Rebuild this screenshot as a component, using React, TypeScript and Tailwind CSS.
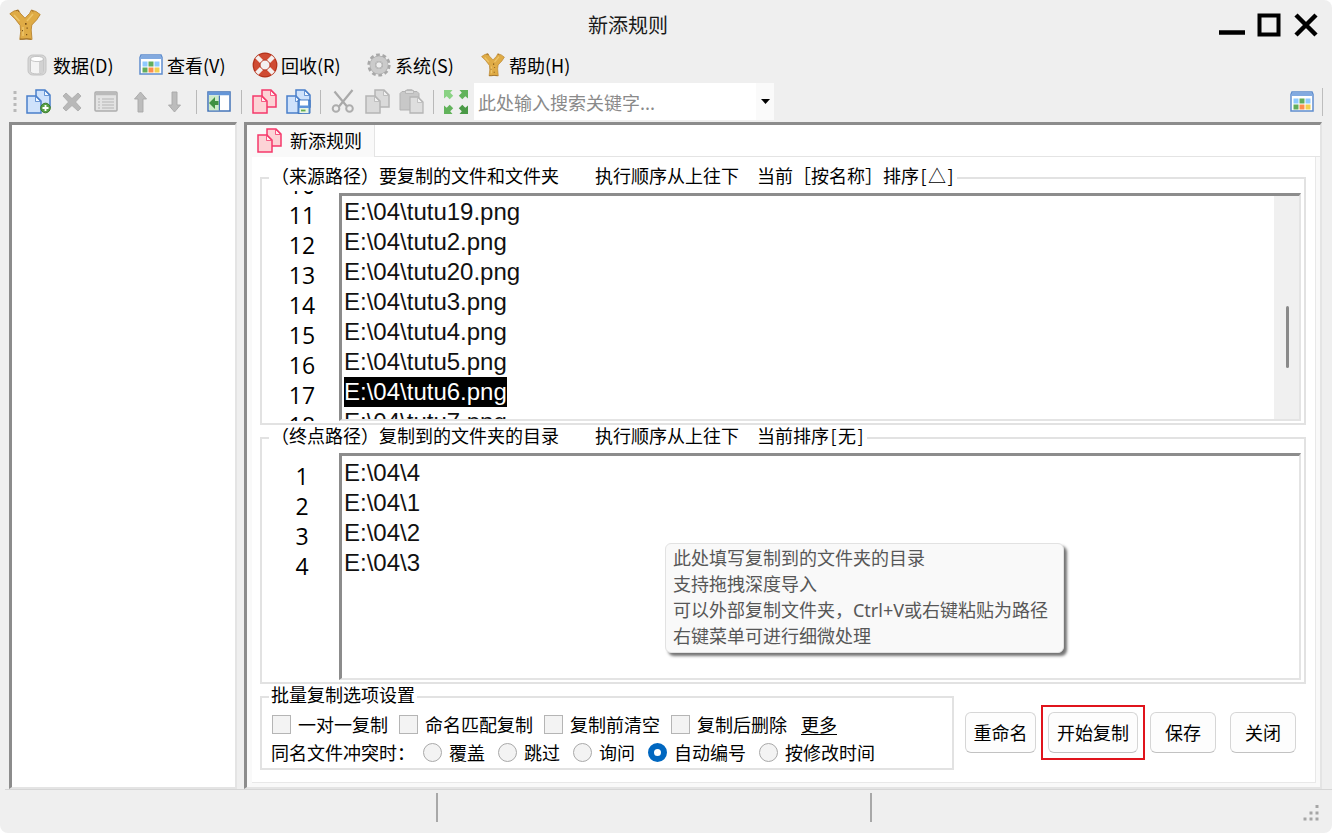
import { useEffect, useRef, useState } from "react";
import type { ReactNode } from "react";

const sourceFiles = [
  "tutu1", "tutu10", "tutu11", "tutu12", "tutu13", "tutu14", "tutu15", "tutu16", "tutu17", "tutu18",
  "tutu19", "tutu2", "tutu20", "tutu3", "tutu4", "tutu5", "tutu6", "tutu7", "tutu8", "tutu9",
].map((name) => `E:\\04\\${name}.png`);
const selectedFile = "E:\\04\\tutu6.png";
const targetFolders = ["E:\\04\\4", "E:\\04\\1", "E:\\04\\2", "E:\\04\\3"];

const ROW_HEIGHT = 30;
const GUTTER_TOP = 10;

/* ---------- icons ---------- */

function LogoIcon({ className }: { className: string }) {
  return (
    <svg viewBox="0 0 32 32" className={className} aria-hidden="true">
      <path
        d="M.8 4.800 5 2l4.400-1 1.600 3 5 5.200 4.600-4.800L22.400 1 27 2.500l4.200 3-3.400 5.200-5 5.300-.6 5 .8 9.500-6-.6-6.200.6.9-8-.5-6-5-6.500Z"
        fill="#dfab45"
        stroke="#b98430"
        strokeWidth=".9"
        strokeLinejoin="round"
      />
      <path d="m5 6 5.500 6M24 5l-6 7" stroke="#edc468" strokeWidth="1.600" fill="none" />
      <path d="M14 18v9" stroke="#edc468" strokeWidth="1.600" fill="none" />
      <path d="M16 14h1.600v1.800H16zM17.500 18.500h1.300v1.300h-1.300zM13 21h1v1.200h-1zM17 25h1.200v1.300H17z" fill="#7a5118" />
      <path d="m7 1.800 1.800-.6 1 1.800M22.600 1.400l1.800 1.200M11 30l3 .2 4-.4 4 .4" stroke="#8f6120" strokeWidth=".8" fill="none" />
    </svg>
  );
}

function DatabaseIcon() {
  return (
    <svg viewBox="0 0 24 24" className="h-6 w-6" aria-hidden="true">
      <rect x="3" y="2" width="18" height="20" rx="4.500" fill="#d6d6d6" stroke="#c4c4c4" />
      <path d="M5.500 6v12.500c0 3.200 13 3.200 13 0V6Z" fill="#f4f4f4" stroke="#bdbdbd" strokeWidth=".8" />
      <path d="M14 8.500v12c3-.3 4.200-1 4.200-2V7Z" fill="#d2d2d2" />
      <ellipse cx="12" cy="6" rx="6.500" ry="2.600" fill="#fff" stroke="#bababa" strokeWidth=".8" />
    </svg>
  );
}

function CalendarIcon() {
  const cells = [
    ["#8fcaff", 3.5, 7.5], ["#63ad5c", 9.5, 7.5], ["#8fcaff", 15.5, 7.5],
    ["#63ad5c", 3.5, 13.5], ["#ff8d4d", 9.5, 13.5], ["#f2d04f", 15.5, 13.5],
  ] as const;
  return (
    <svg viewBox="0 0 24 21" className="h-[21px] w-6" aria-hidden="true">
      <path d="M1 3.500 2 1h20l1 2.500V20H1Z" fill="#fff" stroke="#5f8dce" strokeWidth="1.500" />
      <path d="M1.500 5V3.500l1-2h19l1 2V5Z" fill="#82aae0" />
      {cells.map(([fill, x, y]) => (
        <rect key={`${x}-${y}`} x={x} y={y} width="5" height="5" fill={fill} />
      ))}
    </svg>
  );
}

function LifebuoyIcon() {
  return (
    <svg viewBox="0 0 26 26" className="h-[26px] w-[26px]" aria-hidden="true">
      <circle cx="13" cy="13" r="8.400" fill="none" stroke="#b3311a" strokeWidth="8" />
      <circle cx="13" cy="13" r="8.400" fill="none" stroke="#cf4b33" strokeWidth="5.600" />
      <path d="m4.800 4.800 4.700 4.700M21.200 4.800l-4.700 4.700M4.800 21.200l4.700-4.700M21.200 21.200l-4.700-4.700" stroke="#f4efee" strokeWidth="4.400" />
      <circle cx="13" cy="13" r="4.800" fill="#f3f1f1" stroke="#c0503c" strokeWidth=".8" />
    </svg>
  );
}

function GearIcon() {
  return (
    <svg viewBox="0 0 24 24" className="h-6 w-6" aria-hidden="true">
      <circle cx="12" cy="12" r="9.800" fill="none" stroke="#a8a8a8" strokeWidth="3.600" strokeDasharray="3.600 2.557" />
      <circle cx="12" cy="12" r="6.400" fill="none" stroke="#adadad" strokeWidth="6" />
      <circle cx="12" cy="12" r="6.400" fill="none" stroke="#cbcbcb" strokeWidth="4.800" />
      <circle cx="12" cy="12" r="3.200" fill="#efefef" stroke="#a3a3a3" strokeWidth=".8" />
    </svg>
  );
}

const pageTones = {
  pink: { line: "#f5396b", fill: "#fcd3d6", fold: "#fff0f2" },
  blue: { line: "#4a7fca", fill: "#cfe2fb", fold: "#f3f9ff" },
  gray: { line: "#b5b5b5", fill: "#dadada", fold: "#f1f1f1" },
};

function PagesIcon({ tone, badge }: { tone: keyof typeof pageTones; badge?: "add" | "save" }) {
  const { line, fill, fold } = pageTones[tone];
  return (
    <svg viewBox="0 0 25 25" className="h-[25px] w-[25px]" aria-hidden="true">
      <path d="M10 1h9L24 6v12H10Z" fill={fill} stroke={line} strokeWidth="1.500" />
      <path d="M18.500 1.500V6.500h5Z" fill={fold} stroke={line} strokeWidth=".8" />
      <path d="M1 7h9L15 12v12H1Z" fill={fill} stroke={line} strokeWidth="1.500" />
      <path d="M9.500 7.500v5h5Z" fill={fold} stroke={line} strokeWidth=".8" />
      {badge === "add" && (
        <>
          <circle cx="19.500" cy="19" r="4.800" fill="#57a044" stroke="#3a7a2c" />
          <path d="M19.500 16v6M16.500 19h6" stroke="#fff" strokeWidth="1.800" />
        </>
      )}
      {badge === "save" && (
        <>
          <path d="M12 11h12v13.300H12Z" fill="#5f95da" stroke="#3f74bd" />
          <path d="M14 11.500h8v5h-8Z" fill="#fff" />
          <path d="M13.500 19h9v5h-9Z" fill="#e9f4e3" />
          <path d="M15 21.500h4.500" stroke="#62ad4f" strokeWidth="1.800" />
        </>
      )}
    </svg>
  );
}

function CrossIcon() {
  return (
    <svg viewBox="0 0 20 20" className="h-5 w-5" aria-hidden="true">
      <path d="m1 4 3-3 6 5.500L16 1l3 3-5.500 6 5.500 6-3 3-6-5.500L4 19l-3-3 5.500-6Z" fill="#b8b8b8" stroke="#aaa" strokeWidth=".8" />
    </svg>
  );
}

function ListIcon() {
  return (
    <svg viewBox="0 0 24 21" className="h-[21px] w-6" aria-hidden="true">
      <rect x="1" y="1" width="22" height="19" rx="1" fill="#e3e3e3" stroke="#adadad" strokeWidth="1.500" />
      <path d="M1.500 3h21" stroke="#bababa" strokeWidth="2.500" />
      <path d="M4 8h2M4 11h2M4 14h2M4 17h2M8 8h12M8 11h12M8 14h12M8 17h12" stroke="#b5b5b5" strokeWidth="1.200" />
    </svg>
  );
}

function ArrowIcon({ down }: { down?: boolean }) {
  return (
    <svg viewBox="0 0 13 22" className="h-[22px] w-[13px]" aria-hidden="true">
      <path
        d={down ? "M4 1h5v13h3.500l-6 7-6-7H4Z" : "M6.500 1l6 7H9v13H4V8H.5Z"}
        fill="#bcbcbc"
        stroke="#a8a8a8"
        strokeWidth=".9"
      />
    </svg>
  );
}

function SidebarIcon() {
  return (
    <svg viewBox="0 0 24 21" className="h-[21px] w-6" aria-hidden="true">
      <rect x="1" y="1" width="22" height="19" fill="#fff" stroke="#4474b8" strokeWidth="1.500" />
      <path d="M1 2.800h22" stroke="#6496d8" strokeWidth="3" />
      <path d="M2 4.500h10v14.700H2Z" fill="#cdebc8" />
      <path d="M12.400 4.500v15" stroke="#4474b8" strokeWidth="1.200" />
      <path d="M2 12 8 6v4h3.500v4H8v4Z" fill="#3f9142" />
    </svg>
  );
}

function CutIcon() {
  return (
    <svg viewBox="0 0 24 25" className="h-[25px] w-6" aria-hidden="true">
      <path d="M3.500 2.500 16 17.500M21.500 1 8 17.500" stroke="#a9a9a9" strokeWidth="2.200" fill="none" />
      <circle cx="5" cy="19.500" r="3.300" fill="#efefef" stroke="#adadad" strokeWidth="2" />
      <circle cx="18.500" cy="19.500" r="3.300" fill="#efefef" stroke="#adadad" strokeWidth="2" />
    </svg>
  );
}

function PasteIcon() {
  return (
    <svg viewBox="0 0 25 25" className="h-[25px] w-[25px]" aria-hidden="true">
      <path d="M1 4.500 3 2.500h3L8 .8h5l2 1.700h3l2 2V21H1Z" fill="#c8c8c8" stroke="#b3b3b3" />
      <path d="M6.500 1.500h8v3h-8Z" fill="#dedede" stroke="#b3b3b3" strokeWidth=".8" />
      <path d="M11 8h8L24 13v11H11Z" fill="#dedede" stroke="#b5b5b5" strokeWidth="1.300" />
      <path d="M18.500 8.500v5h5Z" fill="#f3f3f3" stroke="#b8b8b8" strokeWidth=".8" />
    </svg>
  );
}

function ExpandIcon() {
  return (
    <svg viewBox="0 0 26 26" className="h-[26px] w-[26px]" aria-hidden="true">
      <path d="M1 1h8.500L7.200 3.700l3 3-3.500 3.500-3-3L1 9.500Z" fill="#8ad284" />
      <path d="M25 1v8.500l-2.700-2.300-3 3-3.500-3.500 3-3L16.500 1Z" fill="#62b35b" />
      <path d="M1 25v-8.500l2.700 2.300 3-3 3.500 3.500-3 3L9.500 25Z" fill="#62b35b" />
      <path d="M25 25h-8.500l2.300-2.700-3-3 3.500-3.500 3 3 2.700-2.300Z" fill="#4a9a46" />
    </svg>
  );
}

/* ---------- building blocks ---------- */

function MenuItem({ icon, children }: { icon: ReactNode; children: ReactNode }) {
  return (
    <button type="button" className="flex w-[114px] items-center gap-[3px] whitespace-nowrap text-[18px] leading-6 text-black">
      <span className="flex w-[26px] shrink-0 justify-center">{icon}</span>
      {children}
    </button>
  );
}

function ToolButton({ label, disabled, children }: { label: string; disabled?: boolean; children: ReactNode }) {
  return (
    <button type="button" aria-label={label} disabled={disabled} className="flex h-full w-[34px] shrink-0 items-center justify-center">
      {children}
    </button>
  );
}

function ToolSeparator() {
  return (
    <span className="flex w-[11px] shrink-0 justify-center">
      <span className="h-6 w-px bg-[#b9b9b9]" />
    </span>
  );
}

function Bracketed({ children }: { children: ReactNode }) {
  return (
    <>
      <span className="inline-block w-[9px] text-center">[</span>
      {children}
      <span className="inline-block w-[9px] text-center">]</span>
    </>
  );
}

const groupClass = "flex min-w-0 flex-col border-2 border-[#e2e2e2]";
const legendClass = "ml-[7px] h-[26px] px-[2px] text-[18px] leading-5 whitespace-pre text-black";
const sunkenClass =
  "border-t-[3px] border-r-2 border-b-2 border-l-[3px] border-t-[#8c8c8c] border-r-[#e4e4e4] border-b-[#e4e4e4] border-l-[#8c8c8c]";

interface PathGroupProps {
  legend: ReactNode;
  label: string;
  lines: string[];
  selected?: string;
  scrollTo?: number;
}

function PathGroup({ legend, label, lines, selected, scrollTo = 0 }: PathGroupProps) {
  const text = useRef<HTMLTextAreaElement>(null);
  const [view, setView] = useState({ top: 0, height: 240, fraction: 0 });
  const value = lines.join("\n");

  const sync = () => {
    const area = text.current;
    if (!area) return;
    const range = area.scrollHeight - area.clientHeight;
    setView({
      top: area.scrollTop,
      height: area.clientHeight,
      fraction: range > 0 ? area.scrollTop / range : 0,
    });
  };

  useEffect(() => {
    const area = text.current;
    if (!area) return;
    if (selected) {
      const start = value.indexOf(selected);
      area.focus({ preventScroll: true });
      area.setSelectionRange(start, start + selected.length);
      area.scrollTop = scrollTo;
    }
    sync();
    window.addEventListener("resize", sync);
    return () => window.removeEventListener("resize", sync);
  }, []);

  // Only the numbers of rows inside the viewport are rendered.
  const first = Math.max(0, Math.floor((view.top - GUTTER_TOP) / ROW_HEIGHT));
  const last = Math.min(lines.length, Math.ceil((view.top + view.height - GUTTER_TOP) / ROW_HEIGHT));
  const offset = GUTTER_TOP + first * ROW_HEIGHT - view.top;

  return (
    <fieldset className={`${groupClass} min-h-0 flex-1 basis-0 pr-[3px] pb-[2px]`}>
      <legend className={legendClass}>{legend}</legend>
      <div className="flex min-h-0 flex-1">
        <div
          aria-hidden="true"
          className="h-full w-[77px] shrink-0 overflow-hidden pl-[3px] text-center font-['Open_Sans'] text-[23px] leading-[30px] text-black"
        >
          <div style={{ marginTop: offset }}>
            {lines.slice(first, last).map((line, index) => (
              <div key={line}>{first + index + 1}</div>
            ))}
          </div>
        </div>
        <div className={`mt-[2px] flex min-w-0 flex-1 ${sunkenClass}`}>
          <textarea
            ref={text}
            aria-label={label}
            defaultValue={value}
            onScroll={sync}
            spellCheck={false}
            wrap="off"
            className={`min-w-0 flex-1 resize-none bg-white pt-[2px] pl-[2px] font-['Liberation_Sans'] text-[24px] leading-[30px] text-[#111] outline-none [scrollbar-width:none] selection:bg-black selection:text-white ${
              selected ? "pb-[60px]" : ""
            }`}
          />
          {selected && (
            <div className="relative w-[25px] shrink-0 bg-[#f0f0f0]">
              <div
                className="absolute right-[10px] h-[62px] w-[3px] rounded-full bg-[#8a8a8a]"
                style={{ top: `calc((100% - 62px) * ${view.fraction})` }}
              />
            </div>
          )}
        </div>
      </div>
    </fieldset>
  );
}

function CheckOption({ children }: { children: ReactNode }) {
  return (
    <label className="flex items-center gap-[7px]">
      <input type="checkbox" className="h-[19px] w-[19px] appearance-none border border-[#b5b5b5] bg-[#f3f3f3] checked:bg-[#0067c0]" />
      {children}
    </label>
  );
}

function RadioOption({ children, checked }: { children: ReactNode; checked?: boolean }) {
  return (
    <label className="flex items-center gap-[7px]">
      <input
        type="radio"
        name="conflict"
        defaultChecked={checked}
        className="h-[19px] w-[19px] appearance-none rounded-full border border-[#a9a9a9] bg-[#f3f3f3] checked:border-[6px] checked:border-[#0067c0] checked:bg-white"
      />
      {children}
    </label>
  );
}

const actionClass = "h-[41px] rounded-md border border-[#d6d6d6] border-b-[#c2c2c2] bg-[#fdfdfd] text-[18px] leading-5 text-black";

/* ---------- window ---------- */

export default function App() {
  return (
    <div className="bg-white">
      <div className="flex h-screen min-h-[600px] flex-col overflow-hidden rounded-lg bg-[#efefef] font-['Noto_Sans_CJK_SC',sans-serif]">
        <header className="grid h-[46px] shrink-0 grid-cols-[1fr_auto_1fr] items-center pt-1 pr-[13px] pl-[9px]">
          <LogoIcon className="h-8 w-8" />
          <h1 className="pr-[72px] text-[20px] leading-6 text-[#1a1a1a]">新添规则</h1>
          <div className="flex items-center justify-end gap-[12px] text-black">
            <button type="button" aria-label="最小化">
              <svg viewBox="0 0 26 26" className="h-[26px] w-[26px]" aria-hidden="true">
                <path d="M0 20.500h26" stroke="currentColor" strokeWidth="4.500" />
              </svg>
            </button>
            <button type="button" aria-label="最大化">
              <svg viewBox="0 0 24 24" className="h-6 w-6" aria-hidden="true">
                <rect x="2.500" y="2.500" width="19" height="19" fill="none" stroke="currentColor" strokeWidth="4" />
              </svg>
            </button>
            <button type="button" aria-label="关闭窗口">
              <svg viewBox="0 0 26 26" className="h-[26px] w-[26px]" aria-hidden="true">
                <path d="m3 3 20 20M23 3 3 23" stroke="currentColor" strokeWidth="4.500" />
              </svg>
            </button>
          </div>
        </header>

        <nav className="flex h-[37px] shrink-0 items-center pl-[24px]">
          <MenuItem icon={<DatabaseIcon />}>数据(D)</MenuItem>
          <MenuItem icon={<CalendarIcon />}>查看(V)</MenuItem>
          <MenuItem icon={<LifebuoyIcon />}>回收(R)</MenuItem>
          <MenuItem icon={<GearIcon />}>系统(S)</MenuItem>
          <MenuItem icon={<LogoIcon className="h-6 w-6" />}>帮助(H)</MenuItem>
        </nav>

        <div className="flex h-[39px] shrink-0 items-center pr-[9px] pb-[2px] pl-[13px]">
          <svg viewBox="0 0 8 24" className="h-6 w-2 shrink-0" aria-hidden="true">
            <path d="M2 1v22" stroke="#b9b9b9" strokeWidth="3" strokeDasharray="3 3" />
          </svg>
          <ToolButton label="新建"><PagesIcon tone="blue" badge="add" /></ToolButton>
          <ToolButton label="删除" disabled><CrossIcon /></ToolButton>
          <ToolButton label="列表" disabled><ListIcon /></ToolButton>
          <ToolButton label="上移" disabled><ArrowIcon /></ToolButton>
          <ToolButton label="下移" disabled><ArrowIcon down /></ToolButton>
          <ToolSeparator />
          <ToolButton label="侧栏"><SidebarIcon /></ToolButton>
          <ToolSeparator />
          <ToolButton label="批量复制"><PagesIcon tone="pink" /></ToolButton>
          <ToolButton label="复制并保存"><PagesIcon tone="blue" badge="save" /></ToolButton>
          <ToolSeparator />
          <ToolButton label="剪切" disabled><CutIcon /></ToolButton>
          <ToolButton label="复制" disabled><PagesIcon tone="gray" /></ToolButton>
          <ToolButton label="粘贴" disabled><PasteIcon /></ToolButton>
          <ToolSeparator />
          <ToolButton label="全屏"><ExpandIcon /></ToolButton>
          <div className="ml-px flex h-full w-[300px] items-stretch bg-white">
            <input
              type="text"
              aria-label="搜索"
              placeholder="此处输入搜索关键字..."
              className="min-w-0 flex-1 bg-transparent pl-1 text-[18px] leading-6 text-black outline-none placeholder:text-[#8a8a8a]"
            />
            <button type="button" aria-label="展开搜索记录" className="flex w-[18px] items-center justify-center bg-[#fafafa]">
              <svg viewBox="0 0 9 5" className="h-[5px] w-[9px]" aria-hidden="true">
                <path d="M0 0h9L4.500 5Z" fill="#000" />
              </svg>
            </button>
          </div>
          <div className="ml-auto flex items-center gap-2">
            <button type="button" aria-label="视图"><CalendarIcon /></button>
            <span className="h-7 w-px bg-[#bdbdbd]" />
          </div>
        </div>

        <div className="flex min-h-0 flex-1 gap-[7px] pr-[10px] pl-[9px]">
          <aside aria-label="规则列表" className={`w-[228px] shrink-0 bg-white ${sunkenClass}`} />
          <main className={`flex min-w-0 flex-1 flex-col bg-[#f9f9f9] ${sunkenClass}`}>
            <div role="tablist" className="flex h-[32px] shrink-0 bg-white">
              <button
                type="button"
                role="tab"
                aria-selected="true"
                className="flex w-[128px] items-center gap-[8px] border-r border-[#e4e4e4] bg-[#f9f9f9] pb-[2px] pl-[10px] text-[18px] leading-5 text-black"
              >
                <PagesIcon tone="pink" />
                新添规则
              </button>
              <div className="flex-1 border-b border-[#e4e4e4]" />
            </div>

            <section className="mr-1 mb-1 ml-[5px] flex min-h-0 flex-1 flex-col border-r border-b border-[#e8e8e8] bg-white pt-[8px] pr-[9px] pb-[12px] pl-[8px]">
              <div className="relative flex min-h-0 flex-1 flex-col">
                <PathGroup
                  legend={
                    <>
                      （来源路径）要复制的文件和文件夹　　执行顺序从上往下　当前［按名称］排序
                      <Bracketed>△</Bracketed>
                    </>
                  }
                  label="来源路径"
                  lines={sourceFiles}
                  selected={selectedFile}
                  scrollTo={301}
                />
                <PathGroup
                  legend={
                    <>
                      （终点路径）复制到的文件夹的目录　　执行顺序从上往下　当前排序
                      <Bracketed>无</Bracketed>
                    </>
                  }
                  label="终点路径"
                  lines={targetFolders}
                />
                <div
                  role="tooltip"
                  className="absolute bottom-[31px] left-[405px] rounded-md border border-[#e2e2e2] bg-[#f9f9f9] pt-px pr-[15px] pb-[3px] pl-[7px] font-['Noto_Sans','Noto_Sans_CJK_SC',sans-serif] text-[18px] leading-[26px] whitespace-nowrap text-[#575757] shadow-[3px_3px_3px_rgba(0,0,0,0.55)]"
                >
                  <p>此处填写复制到的文件夹的目录</p>
                  <p>支持拖拽深度导入</p>
                  <p>可以外部复制文件夹，Ctrl+V或右键粘贴为路径</p>
                  <p>右键菜单可进行细微处理</p>
                </div>
              </div>

              <div className="flex shrink-0 gap-[11px] text-[18px] leading-5 text-black">
                <fieldset className={`${groupClass} flex-1 pb-[2px]`}>
                  <legend className={legendClass}>批量复制选项设置</legend>
                  <div className="flex h-[28px] items-center gap-[11px] pl-[10px] whitespace-nowrap">
                    <CheckOption>一对一复制</CheckOption>
                    <CheckOption>命名匹配复制</CheckOption>
                    <CheckOption>复制前清空</CheckOption>
                    <CheckOption>复制后删除</CheckOption>
                    <a href="#more" className="ml-[3px] underline underline-offset-2">更多</a>
                  </div>
                  <div role="radiogroup" aria-label="同名文件冲突时" className="flex h-[28px] items-center gap-[13px] pl-[9px] whitespace-nowrap">
                    <span className="-mr-[5px]">同名文件冲突时：</span>
                    <RadioOption>覆盖</RadioOption>
                    <RadioOption>跳过</RadioOption>
                    <RadioOption>询问</RadioOption>
                    <RadioOption checked>自动编号</RadioOption>
                    <RadioOption>按修改时间</RadioOption>
                  </div>
                </fieldset>
                <div className="flex shrink-0 items-center gap-[5px] pt-[10px] pr-[10px]">
                  <button type="button" className={`${actionClass} w-[71px]`}>重命名</button>
                  <div className="border-2 border-[#e0141c] p-[5px]">
                    <button type="button" className={`${actionClass} block w-[90px]`}>开始复制</button>
                  </div>
                  <button type="button" className={`${actionClass} mr-[9px] w-[66px]`}>保存</button>
                  <button type="button" className={`${actionClass} w-[66px]`}>关闭</button>
                </div>
              </div>
            </section>
          </main>
        </div>

        <footer className="flex h-[44px] shrink-0 pl-[5px]">
          <div className="flex flex-1 items-start border-t border-[#d6d6d6] pt-[3px]">
            <span className="h-[29px] flex-1 border-r-2 border-[#a8a8a8]" />
            <span className="h-[29px] flex-1 border-r-2 border-[#a8a8a8]" />
            <span className="h-[29px] flex-1" />
            <svg viewBox="0 0 16 16" className="mt-3 mr-[13px] h-4 w-4 shrink-0" aria-hidden="true">
              <path d="M12.500 0h3v3h-3zM6.500 6.500h3v3h-3zM12.500 6.500h3v3h-3zM.5 12.500h3v3h-3zM6.500 12.500h3v3h-3zM12.500 12.500h3v3h-3z" fill="#a6a6a6" />
            </svg>
          </div>
        </footer>
      </div>
    </div>
  );
}
